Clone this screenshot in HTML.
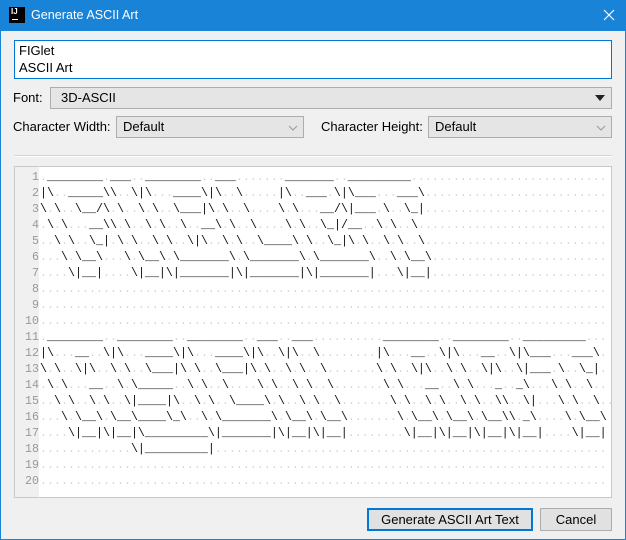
<!DOCTYPE html>
<html><head><meta charset="utf-8"><style>
*{margin:0;padding:0;box-sizing:border-box}
body{width:626px;height:540px;background:#f0f0f0;font-family:"Liberation Sans",sans-serif;font-size:13px;color:#000;position:relative;overflow:hidden}
.abs{position:absolute}
.frame{left:0;top:0;width:626px;height:540px;border:1px solid #1883d7}
.title{left:0;top:0;width:626px;height:31px;background:#1883d7;color:#fff}
.combo{background:#e5e5e5;border:1px solid #adadad;height:22px;line-height:20px;padding-left:6px}
.lbl{line-height:16px}
.ed{left:14px;top:166px;width:598px;height:332px;background:#fff;border:1px solid #c8c8c8}
.gut{position:absolute;left:0;top:0;width:24px;height:330px;background:#f0f0f0;font-family:"Liberation Mono",monospace;font-size:11.67px;color:#999;text-align:right;line-height:16px;padding-top:2px}
.code{position:absolute;left:25px;top:2px;font-family:"Liberation Mono",monospace;font-size:11.67px;line-height:16px;white-space:pre;color:#111}
.code i{font-style:normal;color:#d6d6d6}
.btn{height:23px;background:#e1e1e1;text-align:center;line-height:19px}
</style></head><body>
<div class="abs frame"></div>
<div class="abs title">
 <div class="abs" style="left:9px;top:7px;width:16px;height:16px;background:#000;color:#fff;font-size:8px;font-weight:bold;line-height:10px;padding-left:2px">IJ<div style="position:absolute;left:3px;top:12px;width:6px;height:1px;background:#fff"></div></div>
 <div class="abs" style="left:31px;top:8px;font-size:12.6px">Generate ASCII Art</div>
 <svg class="abs" style="left:603px;top:9px" width="12" height="12"><path d="M1 1L11 11M11 1L1 11" stroke="#fff" stroke-width="1.2"/></svg>
</div>
<div class="abs" style="left:14px;top:40px;width:598px;height:39px;background:#fff;border:1px solid #0078d7;padding:1px 4px;line-height:17px">FIGlet<br>ASCII Art</div>
<div class="abs lbl" style="left:13px;top:90px">Font:</div>
<div class="abs combo" style="left:50px;top:87px;width:562px;padding-left:10px">3D-ASCII
 <svg class="abs" style="right:6px;top:7px" width="10" height="6"><path d="M0 0H10L5 6Z" fill="#222"/></svg></div>
<div class="abs lbl" style="left:13px;top:119px">Character Width:</div>
<div class="abs combo" style="left:116px;top:116px;width:188px">Default
 <svg class="abs" style="right:5px;top:8px" width="10" height="6"><path d="M1 1L5 5L9 1" stroke="#999" fill="none"/></svg></div>
<div class="abs lbl" style="left:321px;top:119px">Character Height:</div>
<div class="abs combo" style="left:428px;top:116px;width:184px">Default
 <svg class="abs" style="right:5px;top:8px" width="10" height="6"><path d="M1 1L5 5L9 1" stroke="#999" fill="none"/></svg></div>
<div class="abs" style="left:14px;top:155px;width:598px;height:1px;background:#d5d5d5"></div>
<div class="abs" style="left:14px;top:156px;width:598px;height:1px;background:#fff"></div>
<div class="abs ed">
<div class="gut">1<br>2<br>3<br>4<br>5<br>6<br>7<br>8<br>9<br>10<br>11<br>12<br>13<br>14<br>15<br>16<br>17<br>18<br>19<br>20</div>
<div class="code"><i>.</i>________<i>.</i>___<i>..</i>________<i>..</i>___<i>.......</i>_______<i>..</i>_________<i>............................</i>
|\<i>..</i>_____\\<i>..</i>\|\<i>...</i>____\|\<i>..</i>\<i>.....</i>|\<i>..</i>___<i>.</i>\|\___<i>...</i>___\<i>..........................</i>
\<i>.</i>\<i>..</i>\__/\<i>.</i>\<i>..</i>\<i>.</i>\<i>..</i>\___|\<i>.</i>\<i>..</i>\<i>....</i>\<i>.</i>\<i>...</i>__/\|___<i>.</i>\<i>..</i>\_|<i>..........................</i>
<i>.</i>\<i>.</i>\<i>...</i>__\\<i>.</i>\<i>..</i>\<i>.</i>\<i>..</i>\<i>..</i>__\<i>.</i>\<i>..</i>\<i>....</i>\<i>.</i>\<i>..</i>\_|/__<i>..</i>\<i>.</i>\<i>..</i>\<i>...........................</i>
<i>..</i>\<i>.</i>\<i>..</i>\_|<i>.</i>\<i>.</i>\<i>..</i>\<i>.</i>\<i>..</i>\|\<i>..</i>\<i>.</i>\<i>..</i>\____\<i>.</i>\<i>..</i>\_|\<i>.</i>\<i>..</i>\<i>.</i>\<i>..</i>\<i>..........................</i>
<i>...</i>\<i>.</i>\__\<i>...</i>\<i>.</i>\__\<i>.</i>\_______\<i>.</i>\_______\<i>.</i>\_______\<i>..</i>\<i>.</i>\__\<i>.........................</i>
<i>....</i>\|__|<i>....</i>\|__|\|_______|\|_______|\|_______|<i>...</i>\|__|<i>.........................</i>
<i>.................................................................................</i>
<i>.................................................................................</i>
<i>.................................................................................</i>
<i>.</i>________<i>..</i>________<i>..</i>________<i>..</i>___<i>..</i>___<i>..........</i>________<i>..</i>________<i>..</i>_________<i>...</i>
|\<i>...</i>__<i>..</i>\|\<i>...</i>____\|\<i>...</i>____\|\<i>..</i>\|\<i>..</i>\<i>........</i>|\<i>...</i>__<i>..</i>\|\<i>...</i>__<i>..</i>\|\___<i>...</i>___\<i>.</i>
\<i>.</i>\<i>..</i>\|\<i>..</i>\<i>.</i>\<i>..</i>\___|\<i>.</i>\<i>..</i>\___|\<i>.</i>\<i>..</i>\<i>.</i>\<i>..</i>\<i>.......</i>\<i>.</i>\<i>..</i>\|\<i>..</i>\<i>.</i>\<i>..</i>\|\<i>..</i>\|___<i>.</i>\<i>..</i>\_|<i>.</i>
<i>.</i>\<i>.</i>\<i>...</i>__<i>..</i>\<i>.</i>\_____<i>..</i>\<i>.</i>\<i>..</i>\<i>....</i>\<i>.</i>\<i>..</i>\<i>.</i>\<i>..</i>\<i>.......</i>\<i>.</i>\<i>...</i>__<i>..</i>\<i>.</i>\<i>...</i>_<i>..</i>_\<i>...</i>\<i>.</i>\<i>..</i>\<i>..</i>
<i>..</i>\<i>.</i>\<i>..</i>\<i>.</i>\<i>..</i>\|____|\<i>..</i>\<i>.</i>\<i>..</i>\____\<i>.</i>\<i>..</i>\<i>.</i>\<i>..</i>\<i>.......</i>\<i>.</i>\<i>..</i>\<i>.</i>\<i>..</i>\<i>.</i>\<i>..</i>\\<i>..</i>\|<i>...</i>\<i>.</i>\<i>..</i>\<i>..</i>
<i>...</i>\<i>.</i>\__\<i>.</i>\__\____\_\<i>..</i>\<i>.</i>\_______\<i>.</i>\__\<i>.</i>\__\<i>.......</i>\<i>.</i>\__\<i>.</i>\__\<i>.</i>\__\\<i>.</i>_\<i>....</i>\<i>.</i>\__\
<i>....</i>\|__|\|__|\_________\|_______|\|__|\|__|<i>........</i>\|__|\|__|\|__|\|__|<i>....</i>\|__|
<i>.............</i>\|_________|<i>........................................................</i>
<i>.................................................................................</i>
<i>.................................................................................</i></div>
</div>
<div class="abs btn" style="left:367px;top:508px;width:166px;border:2px solid #0078d7">Generate ASCII Art Text</div>
<div class="abs btn" style="left:540px;top:508px;width:72px;border:1px solid #adadad;line-height:21px">Cancel</div>
</body></html>
